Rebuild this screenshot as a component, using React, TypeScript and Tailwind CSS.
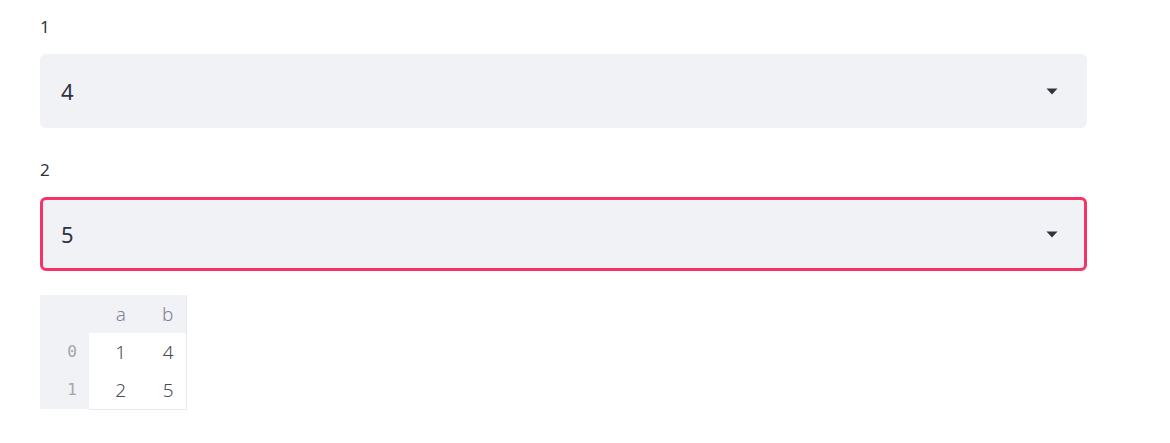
const Caret = () => (
    <svg width="12" height="7" viewBox="0 0 12 7" className="shrink-0">
        <path d="M0.5 0.5 H11.5 L6 6.5 Z" fill="#31333f" />
    </svg>
)

const Select = ({ label, value, focused }: { label: string; value: string; focused?: boolean }) => (
    <div className="flex flex-col">
        <label className="text-[17px] leading-[22px] text-[#31333f] mb-4">{label}</label>
        <div
            className={
                focused
                    ? "h-[74px] flex items-center justify-between rounded-md bg-[#f0f2f6] border-[3px] border-[#f63366] pl-[18px] pr-[26px]"
                    : "h-[74px] flex items-center justify-between rounded-md bg-[#f0f2f6] border-[3px] border-transparent pl-[18px] pr-[26px]"
            }
        >
            <span className="text-[22px] text-[#31333f]">{value}</span>
            <Caret />
        </div>
    </div>
)

export default function App() {
    const rows = [
        ["0", "1", "4"],
        ["1", "2", "5"],
    ]

    return (
        <main className="bg-white w-[1170px] h-[443px] pt-4 pl-10" style={{ fontFamily: '"Noto Sans", "Open Sans", sans-serif' }}>
            <div className="w-[1047px] flex flex-col">
                <Select label="1" value="4" />
                <div className="h-[31px]" />
                <Select label="2" value="5" focused />

                {/* dataframe */}
                <table className="self-start mt-6 border-collapse text-[19px] font-light">
                    <thead>
                        <tr className="h-[38px] bg-[#f0f2f6] text-[#808495]">
                            <th className="w-[49px] p-0" />
                            <th className="w-[49px] pr-3 text-right font-light">a</th>
                            <th className="w-[48px] pr-3 text-right font-light border-r border-[#e6e9ef]">b</th>
                        </tr>
                    </thead>
                    <tbody>
                        {rows.map((r, i) => (
                            <tr key={i} className="h-[38px]">
                                <td className="bg-[#f0f2f6] pr-3 text-right text-[16px] text-[#a0a6b0]" style={{ fontFamily: '"DejaVu Sans Mono", monospace' }}>{r[0]}</td>
                                <td className={i === 1 ? "pr-3 text-right text-[#4a4c55] border-b border-[#e6e9ef]" : "pr-3 text-right text-[#4a4c55]"}>{r[1]}</td>
                                <td className={i === 1 ? "pr-3 text-right text-[#4a4c55] border-r border-b border-[#e6e9ef]" : "pr-3 text-right text-[#4a4c55] border-r border-[#e6e9ef]"}>{r[2]}</td>
                            </tr>
                        ))}
                    </tbody>
                </table>
            </div>
        </main>
    )
}
